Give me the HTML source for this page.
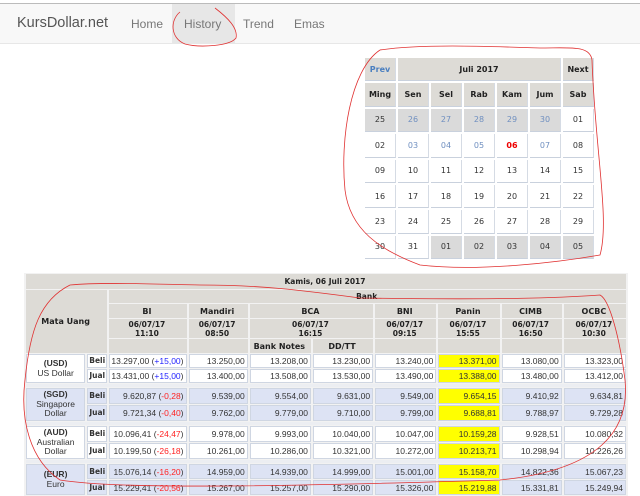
<!DOCTYPE html>
<html><head><meta charset="utf-8">
<style>
*{box-sizing:border-box;margin:0;padding:0}
body{width:640px;height:490px;overflow:hidden;background:#fff;font-family:"Liberation Sans",sans-serif;position:relative}
.topline{position:absolute;left:0;top:3px;width:640px;height:1px;background:#bbb}
.nav{position:absolute;left:0;top:4px;width:640px;height:40px;background:#f8f8f8;border-bottom:1px solid #e7e7e7}
.nav span{position:absolute;top:13px;font-size:12px;color:#777}
.nav span.brand{left:17px;font-size:14.5px;color:#555;top:11px}
.hist{position:absolute;left:172px;top:0;width:63px;height:40px;background:#e7e7e7}
table{border-collapse:separate;font-family:"DejaVu Sans",sans-serif}
.cal{position:absolute;left:363px;top:56px;border-spacing:2px}
.cal td{width:31px;height:23.4px;text-align:center;font-size:8px;color:#333;border-bottom:1px solid #c9d1dd;border-right:1px solid #d5dbe4;background:#fff;padding:0}
.cal .h{background:#dddbd6;font-weight:bold;color:#222}
.cal .o{background:#dadada;color:#333}
.cal .b{color:#6f8fc0}
.cal .r{color:#e00;font-weight:bold}
.kt{position:absolute;left:24px;top:273px;width:604px;border-spacing:2px 1px;background:#f2f2f2;table-layout:fixed}
.kt td{font-size:8.5px;line-height:10px;font-family:"Liberation Sans",sans-serif;color:#333;text-align:right;padding:0 2px 0 0;background:#fff;border:1px solid #cfd6e2;white-space:nowrap;overflow:hidden}
.kt .hd{background:#dddbd6;font-weight:bold;text-align:center;font-family:"DejaVu Sans",sans-serif;font-size:7.5px;border:none;color:#222;line-height:9px}
.kt .lb{font-weight:bold;text-align:center;font-family:"DejaVu Sans",sans-serif;font-size:7.5px;padding:0}
.kt .cur{text-align:center;font-size:8.5px;padding:0;line-height:9.5px}
.kt .y{background:#ff0}
.kt .s td{background:#dde3f4}
.kt .s td.y{background:#ff0}
.kt .g td{background:#eceef2;border:none;height:3px;padding:0;line-height:0;font-size:0}
.p{color:#22f}.n{color:#f22}
</style></head><body>
<div class="topline"></div>
<div class="nav"><div class="hist"></div>
<span class="brand">KursDollar.net</span>
<span style="left:131px">Home</span>
<span style="left:184px">History</span>
<span style="left:243px">Trend</span>
<span style="left:294px">Emas</span>
</div>
<table class="cal">
<tr><td class="h" style="color:#4a7fc0">Prev</td><td class="h" colspan="5">Juli 2017</td><td class="h">Next</td></tr>
<tr><td class="h">Ming</td><td class="h">Sen</td><td class="h">Sel</td><td class="h">Rab</td><td class="h">Kam</td><td class="h">Jum</td><td class="h">Sab</td></tr>
<tr><td class="o">25</td><td class="o b">26</td><td class="o b">27</td><td class="o b">28</td><td class="o b">29</td><td class="o b">30</td><td>01</td></tr>
<tr><td>02</td><td class="b">03</td><td class="b">04</td><td class="b">05</td><td class="r">06</td><td class="b">07</td><td>08</td></tr>
<tr><td>09</td><td>10</td><td>11</td><td>12</td><td>13</td><td>14</td><td>15</td></tr>
<tr><td>16</td><td>17</td><td>18</td><td>19</td><td>20</td><td>21</td><td>22</td></tr>
<tr><td>23</td><td>24</td><td>25</td><td>26</td><td>27</td><td>28</td><td>29</td></tr>
<tr><td>30</td><td>31</td><td class="o">01</td><td class="o">02</td><td class="o">03</td><td class="o">04</td><td class="o">05</td></tr>
</table>
<table class="kt">
<colgroup><col style="width:59px"><col style="width:20px"><col style="width:77px"><col style="width:59px"><col style="width:61px"><col style="width:60px"><col style="width:61px"><col style="width:61px"><col style="width:60px"><col style="width:62px"></colgroup>
<tr style="height:15px"><td class="hd" colspan="10" style="text-align:center">Kamis, 06 Juli 2017</td></tr>
<tr style="height:13px"><td class="hd" colspan="2" rowspan="4" style="font-size:8px">Mata Uang</td><td class="hd" colspan="8">Bank</td></tr>
<tr style="height:14px"><td class="hd" style="font-size:8px">BI</td><td class="hd" style="font-size:8px">Mandiri</td><td class="hd" colspan="2" style="font-size:8px">BCA</td><td class="hd" style="font-size:8px">BNI</td><td class="hd" style="font-size:8px">Panin</td><td class="hd" style="font-size:8px">CIMB</td><td class="hd" style="font-size:8px">OCBC</td></tr>
<tr style="height:19px"><td class="hd">06/07/17<br>11:10</td><td class="hd">06/07/17<br>08:50</td><td class="hd" colspan="2">06/07/17<br>16:15</td><td class="hd">06/07/17<br>09:15</td><td class="hd">06/07/17<br>15:55</td><td class="hd">06/07/17<br>16:50</td><td class="hd">06/07/17<br>10:30</td></tr>
<tr style="height:14px"><td class="hd"></td><td class="hd"></td><td class="hd" style="font-size:8px">Bank Notes</td><td class="hd" style="font-size:8px">DD/TT</td><td class="hd"></td><td class="hd"></td><td class="hd"></td><td class="hd"></td></tr>
<tr style="height:14px"><td class="cur" rowspan="2"><b>(USD)</b><br>US Dollar</td><td class="lb">Beli</td><td>13.297,00 (<span class="p">+15,00</span>)</td><td>13.250,00</td><td>13.208,00</td><td>13.230,00</td><td>13.240,00</td><td class="y">13.371,00</td><td>13.080,00</td><td>13.323,00</td></tr>
<tr style="height:14px"><td class="lb">Jual</td><td>13.431,00 (<span class="p">+15,00</span>)</td><td>13.400,00</td><td>13.508,00</td><td>13.530,00</td><td>13.490,00</td><td class="y">13.388,00</td><td>13.480,00</td><td>13.412,00</td></tr>
<tr class="g"><td colspan="10"></td></tr>
<tr class="s" style="height:16px"><td class="cur" rowspan="2"><b>(SGD)</b><br>Singapore<br>Dollar</td><td class="lb">Beli</td><td>9.620,87 (<span class="n">-0,28</span>)</td><td>9.539,00</td><td>9.554,00</td><td>9.631,00</td><td>9.549,00</td><td class="y">9.654,15</td><td>9.410,92</td><td>9.634,81</td></tr>
<tr class="s" style="height:16px"><td class="lb">Jual</td><td>9.721,34 (<span class="n">-0,40</span>)</td><td>9.762,00</td><td>9.779,00</td><td>9.710,00</td><td>9.799,00</td><td class="y">9.688,81</td><td>9.788,97</td><td>9.729,28</td></tr>
<tr class="g"><td colspan="10"></td></tr>
<tr style="height:16px"><td class="cur" rowspan="2"><b>(AUD)</b><br>Australian<br>Dollar</td><td class="lb">Beli</td><td>10.096,41 (<span class="n">-24,47</span>)</td><td>9.978,00</td><td>9.993,00</td><td>10.040,00</td><td>10.047,00</td><td class="y">10.159,28</td><td>9.928,51</td><td>10.080,32</td></tr>
<tr style="height:16px"><td class="lb">Jual</td><td>10.199,50 (<span class="n">-26,18</span>)</td><td>10.261,00</td><td>10.286,00</td><td>10.321,00</td><td>10.272,00</td><td class="y">10.213,71</td><td>10.298,94</td><td>10.226,26</td></tr>
<tr class="g"><td colspan="10"></td></tr>
<tr class="s" style="height:15px"><td class="cur" rowspan="2"><b>(EUR)</b><br>Euro</td><td class="lb">Beli</td><td>15.076,14 (<span class="n">-16,20</span>)</td><td>14.959,00</td><td>14.939,00</td><td>14.999,00</td><td>15.001,00</td><td class="y">15.158,70</td><td>14.822,36</td><td>15.067,23</td></tr>
<tr class="s" style="height:15px"><td class="lb">Jual</td><td>15.229,41 (<span class="n">-20,56</span>)</td><td>15.267,00</td><td>15.257,00</td><td>15.290,00</td><td>15.326,00</td><td class="y">15.219,88</td><td>15.331,81</td><td>15.249,94</td></tr>
</table>
<svg style="position:absolute;left:0;top:0" width="640" height="490" fill="none" stroke="#e03030" stroke-width="0.8">
<path d="M180 12 C170 20 170 38 185 44 C200 48 230 46 236 38 C238 28 228 18 215 8"/>
<path d="M380 50 C350 70 340 140 345 190 C350 230 380 250 420 265 C480 272 560 262 600 255 C610 220 595 150 592 60 C590 45 570 48 540 48 C480 46 420 44 380 50"/>
<path d="M70 285 C40 300 30 330 25 380 C20 420 30 460 60 480 C120 490 300 486 500 480 C600 470 630 430 625 380 C620 340 610 300 600 295 C560 298 500 300 360 298 C300 290 260 285 200 285 C150 284 100 282 70 285"/>
</svg>
</body></html>
